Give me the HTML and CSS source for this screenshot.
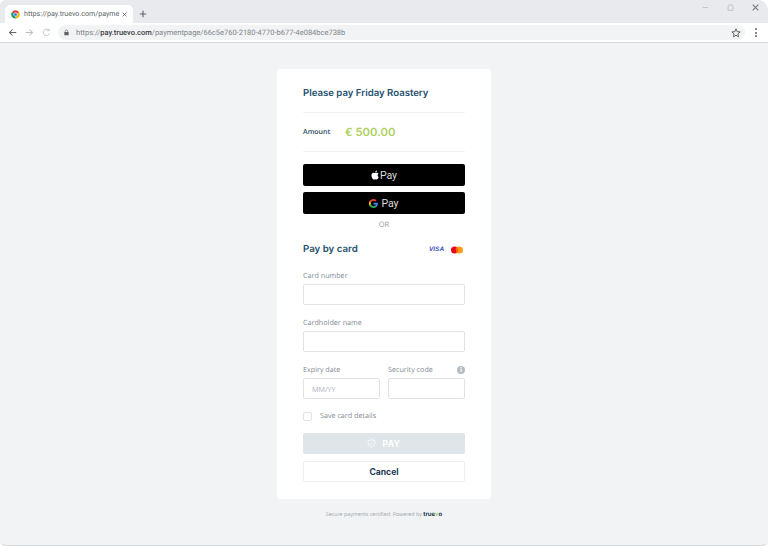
FILE: index.html

```html
<!DOCTYPE html>
<html lang="en">
<head>
    <meta charset="UTF-8">
    <meta name="viewport" content="width=device-width, initial-scale=1.0">
    <title>Truevo payment page</title>
    <link rel="stylesheet" href="styles.css">
</head>
<body>
    <div class="window">
        <div class="tabstrip">
            <div class="tab">
                <svg class="favicon" viewBox="0 0 16 16">
                    <path d="M8 8 L1.5 4.2 A7.5 7.5 0 0 1 14.5 4.2 Z" fill="#db4437"/>
                    <path d="M8 8 L14.5 4.2 A7.5 7.5 0 0 1 8 15.5 Z" fill="#f4b400"/>
                    <path d="M8 8 L8 15.5 A7.5 7.5 0 0 1 1.5 4.2 Z" fill="#0f9d58"/>
                    <circle cx="8" cy="8" r="3.7" fill="#fff"/>
                    <circle cx="8" cy="8" r="2.8" fill="#4285f4"/>
                </svg>
                <span class="tab-title">https://pay.truevo.com/payme</span>
                <svg class="tab-close" viewBox="0 0 8 8"><path d="M1 1 L7 7 M7 1 L1 7"/></svg>
            </div>
            <svg class="new-tab" viewBox="0 0 10 10"><path d="M5 1 V9 M1 5 H9"/></svg>
            <div class="window-controls">
                <svg class="win-min" viewBox="0 0 10 10"><path d="M1 5 H9"/></svg>
                <svg class="win-max" viewBox="0 0 10 10"><path d="M1.5 9 V4.5 A3.5 3.5 0 0 1 8.5 4.5 V9 Z"/></svg>
                <svg class="win-close" viewBox="0 0 10 10"><path d="M1 1 L9 9 M9 1 L1 9"/></svg>
            </div>
        </div>

        <div class="toolbar">
            <svg class="nav nav-back" viewBox="0 0 12 12"><path d="M11 6 H2 M6 2 L2 6 L6 10"/></svg>
            <svg class="nav nav-fwd" viewBox="0 0 12 12"><path d="M1 6 H10 M6 2 L10 6 L6 10"/></svg>
            <svg class="nav nav-reload" viewBox="0 0 12 12"><path d="M10 7 A4.2 4.2 0 1 1 9 3 M9.6 0.8 V3.4 H7"/></svg>
            <div class="address">
                <svg class="lock" viewBox="0 0 8 10">
                    <rect x="0.5" y="4" width="7" height="5.5" rx="0.8"/>
                    <path d="M2 4 V2.8 A2 2 0 0 1 6 2.8 V4" class="lock-loop"/>
                </svg>
                <span class="url">https://<b>pay.truevo.com</b>/paymentpage/66c5e760-2180-4770-b677-4e084bce738b</span>
                <svg class="star" viewBox="0 0 12 12"><path d="M6 1 L7.4 4.4 L11 4.7 L8.3 7 L9.1 10.6 L6 8.7 L2.9 10.6 L3.7 7 L1 4.7 L4.6 4.4 Z"/></svg>
            </div>
            <div class="menu-dots"><i></i><i></i><i></i></div>
        </div>

        <div class="page">
            <div class="card">
                <h1 class="merchant">Please pay Friday Roastery</h1>
                <div class="amount-row">
                    <span class="amount-label">Amount</span>
                    <span class="amount-value">€ 500.00</span>
                </div>

                <button class="wallet-btn">
                    <svg class="apple-logo" viewBox="0 0 14 17">
                        <path d="M11.6 9c0-2 1.6-2.9 1.7-3-1-1.400-2.400-1.600-2.900-1.600-1.200-.1-2.400.7-3 .7s-1.600-.7-2.600-.7C3.400 4.400 2.100 5.200 1.400 6.400c-1.400 2.400-.4 6 1 8 .7 1 1.500 2.100 2.500 2 1-.04 1.400-.6 2.600-.6s1.600.6 2.600.6c1.100 0 1.800-1 2.400-2 .8-1.100 1.100-2.200 1.100-2.300-.02 0-2-.8-2-3.100z"/>
                        <path d="M9.700 3.200c.5-.7.900-1.600.8-2.500-.8 0-1.700.5-2.300 1.200-.5.6-.9 1.500-.8 2.400.9.1 1.800-.4 2.300-1.100z"/>
                    </svg>
                    <span>Pay</span>
                </button>
                <button class="wallet-btn">
                    <svg class="google-logo" viewBox="0 0 16 16">
                        <path d="M15.700 8.200c0-.6-.05-1.100-.15-1.600H8v3h4.300c-.2 1-.75 1.800-1.600 2.400v2h2.600c1.500-1.400 2.400-3.400 2.400-5.800z" fill="#4285f4"/>
                        <path d="M8 16c2.200 0 4-.7 5.300-2l-2.600-2c-.7.5-1.600.8-2.700.8-2.100 0-3.900-1.400-4.500-3.300H.5v2C1.800 14.200 4.700 16 8 16z" fill="#34a853"/>
                        <path d="M3.500 9.500C3.200 8.600 3.200 7.400 3.500 6.500v-2H.5C-.2 6-.2 10 .5 11.500l3-2z" fill="#fbbc04"/>
                        <path d="M8 3.200c1.200 0 2.200.4 3 1.200l2.300-2.300C11.900.8 10.100 0 8 0 4.700 0 1.800 1.800.5 4.500l3 2C4.100 4.600 5.900 3.200 8 3.200z" fill="#ea4335"/>
                    </svg>
                    <span>Pay</span>
                </button>
                <div class="or">OR</div>

                <div class="card-head">
                    <h2>Pay by card</h2>
                    <div class="brands">
                        <span class="visa">VISA</span>
                        <svg class="mastercard" viewBox="0 0 20 12">
                            <circle cx="6" cy="6" r="6" fill="#eb001b"/>
                            <circle cx="14" cy="6" r="6" fill="#f79e1b"/>
                            <path d="M10 1.500 A6 6 0 0 1 10 10.500 A6 6 0 0 1 10 1.500 Z" fill="#ff5f00"/>
                        </svg>
                    </div>
                </div>

                <div class="field">
                    <label for="number">Card number</label>
                    <input id="number" type="text">
                </div>
                <div class="field">
                    <label for="holder">Cardholder name</label>
                    <input id="holder" type="text">
                </div>
                <div class="field-row">
                    <div class="field">
                        <label for="expiry">Expiry date</label>
                        <input id="expiry" type="text" placeholder="MM/YY">
                    </div>
                    <div class="field">
                        <div class="label-row">
                            <label for="cvv">Security code</label>
                            <span class="info">i</span>
                        </div>
                        <input id="cvv" type="text">
                    </div>
                </div>

                <label class="save-card">
                    <span class="checkbox"></span>
                    Save card details
                </label>

                <button class="pay-btn">
                    <svg class="shield" viewBox="0 0 12 12"><path d="M6 1 L10.500 2.500 V5.500 C10.500 8 8.500 10 6 11 C3.500 10 1.500 8 1.500 5.500 V2.500 Z M4 5.800 L5.500 7.300 L8 4.800"/></svg>
                    <span>PAY</span>
                </button>
                <button class="cancel-btn">Cancel</button>
            </div>
            <div class="footer">Secure payments certified. Powered by <b class="brand">true<span class="brand-v">v</span>o</b></div>
        </div>
    </div>
</body>
</html>
```

FILE: styles.css

```css
* {
    box-sizing: border-box;
}

html, body {
    margin: 0;
    height: 100%;
    overflow: hidden;
    background: #fff;
}

body {
    font-family: 'Open Sans', sans-serif;
    text-rendering: geometricPrecision;
}

svg {
    display: block;
    flex: none;
}

.window {
    height: 546px;
    display: flex;
    flex-direction: column;
    border-radius: 6px 10px 6px 6px;
    overflow: hidden;
    background: #f1f3f5;
    border-bottom: 1px solid #d5d8db;
}

/* browser chrome */
.tabstrip {
    height: 23px;
    flex: none;
    background: #e8eaed;
    display: flex;
    align-items: flex-end;
    padding-left: 5px;
}

.tab {
    width: 128px;
    height: 18px;
    background: #fff;
    border-radius: 5px 5px 0 0;
    display: flex;
    align-items: center;
    padding-left: 6px;
}

.favicon {
    width: 9px;
    height: 9px;
}

.tab-title {
    margin-left: 4px;
    font-family: 'Roboto', sans-serif;
    font-size: 7.1px;
    line-height: 12px;
    color: #5a5f64;
    white-space: nowrap;
    width: 94px;
}

.tab-close {
    width: 5px;
    height: 5px;
    margin-left: 4px;
}

.tab-close path {
    stroke: #5f6368;
    stroke-width: 1.3;
    fill: none;
}

.new-tab {
    width: 8px;
    height: 8px;
    margin: 0 0 5px 6px;
}

.new-tab path {
    stroke: #5f6368;
    stroke-width: 1.4;
    fill: none;
}

.window-controls {
    margin-left: auto;
    align-self: flex-start;
    display: flex;
    gap: 18px;
    padding: 4px 9px 0 0;
}

.window-controls svg {
    width: 7px;
    height: 7px;
    fill: none;
    stroke-width: 1;
}

.win-min, .win-max {
    stroke: #b4b7ba;
}

.window-controls .win-close {
    stroke: #75797d;
    stroke-width: 1.6;
}

.toolbar {
    height: 20px;
    flex: none;
    background: #fff;
    border-bottom: 1px solid #d4d6d9;
    display: flex;
    align-items: center;
    padding: 0 11px 0 8px;
}

.nav {
    width: 9px;
    height: 9px;
    margin-right: 8px;
    fill: none;
    stroke-width: 1.4;
}

.nav-back {
    stroke: #5f6368;
}

.nav-fwd, .nav-reload {
    stroke: #b9bcbf;
}

.nav-reload {
    margin-right: 7px;
    stroke-width: 1.1;
}

.address {
    flex: 1;
    height: 15px;
    background: #f1f3f4;
    border-radius: 8px;
    display: flex;
    align-items: center;
    padding: 0 4px 0 6px;
}

.lock {
    width: 5px;
    height: 7px;
    fill: #5f6368;
}

.lock-loop {
    fill: none;
    stroke: #5f6368;
}

.url {
    margin-left: 7px;
    font-family: 'Roboto', sans-serif;
    font-size: 7.5px;
    color: #80868b;
    white-space: nowrap;
}

.url b {
    font-weight: 500;
    color: #3c4043;
}

.star {
    width: 10px;
    height: 10px;
    margin-left: auto;
    fill: none;
    stroke: #5f6368;
    stroke-width: 1.2;
}

.menu-dots {
    display: flex;
    flex-direction: column;
    gap: 1.5px;
    margin-left: 10px;
}

.menu-dots i {
    width: 2px;
    height: 2px;
    border-radius: 50%;
    background: #5f6368;
}

/* payment page */
.page {
    flex: 1;
    display: flex;
    flex-direction: column;
    align-items: center;
    padding-top: 26px;
}

.card {
    width: 214px;
    height: 430px;
    background: #fff;
    border-radius: 3px;
    padding: 0 26px;
}

h1, h2 {
    margin: 0;
    font-family: 'Inter', sans-serif;
    font-weight: 600;
    color: #24506d;
}

.merchant {
    height: 44px;
    padding-top: 18px;
    font-size: 9.6px;
    line-height: 13px;
    border-bottom: 1px solid #f1f2f3;
}

.amount-row {
    height: 39px;
    display: flex;
    align-items: center;
    border-bottom: 1px solid #f1f2f3;
}

.amount-label {
    width: 42px;
    font-size: 7px;
    font-weight: 600;
    color: #26465c;
}

.amount-value {
    font-family: 'Inter', sans-serif;
    font-size: 11.3px;
    font-weight: 600;
    color: #aed160;
}

button {
    display: flex;
    align-items: center;
    justify-content: center;
    width: 100%;
    padding: 0;
    border-radius: 2px;
    cursor: pointer;
}

.wallet-btn {
    height: 22px;
    margin-top: 6px;
    gap: 1px;
    background: #000;
    border: none;
    color: #dcdcdc;
    font-family: 'Roboto', sans-serif;
    font-size: 10.5px;
}

.amount-row + .wallet-btn {
    margin-top: 12px;
}

.apple-logo {
    width: 8px;
    height: 10px;
    fill: #fff;
}

.google-logo {
    width: 9px;
    height: 9px;
    margin-right: 2px;
}

.or {
    margin-top: 6px;
    text-align: center;
    font-size: 7.5px;
    line-height: 11px;
    color: #8e9aa3;
}

.card-head {
    display: flex;
    align-items: center;
    justify-content: space-between;
    height: 18px;
    padding-top: 1px;
    margin-top: 9px;
}

h2 {
    font-size: 9.7px;
}

.brands {
    display: flex;
    align-items: center;
    gap: 7px;
    padding-right: 2px;
}

.visa {
    font-family: 'Liberation Sans', sans-serif;
    font-size: 6.4px;
    font-weight: 700;
    font-style: italic;
    color: #3f51c4;
}

.mastercard {
    width: 12px;
    height: 8px;
}

.field {
    display: block;
    flex: 1;
    min-width: 0;
    margin-top: 12px;
}

.field label {
    display: block;
    height: 14px;
    font-size: 7.2px;
    line-height: 13px;
    color: #7f8b94;
}

.field input {
    display: block;
    width: 100%;
    height: 21px;
    padding: 0 8px;
    margin: 0;
    background: #fff;
    border: 1px solid #dfe3e6;
    border-radius: 2px;
    font-family: 'Open Sans', sans-serif;
    font-size: 7.2px;
}

.field input::placeholder {
    color: #a9b3bb;
    opacity: 1;
}

.field-row {
    display: flex;
    gap: 8px;
    margin-top: 12px;
}

.field-row .field {
    margin-top: 0;
}

.label-row {
    display: flex;
    justify-content: space-between;
    height: 14px;
}

.info {
    width: 8px;
    height: 8px;
    border-radius: 50%;
    background: #b4bdc4;
    color: #fff;
    font-size: 6.5px;
    font-weight: 700;
    line-height: 8px;
    text-align: center;
    margin-top: 2px;
}

.save-card {
    display: flex;
    align-items: center;
    gap: 8px;
    height: 10px;
    margin-top: 12px;
    font-size: 7.2px;
    line-height: 12px;
    color: #7f8b94;
}

.checkbox {
    width: 9px;
    height: 9px;
    border: 1px solid #dfe3e6;
    border-radius: 2px;
}

.pay-btn {
    height: 21px;
    margin-top: 12px;
    gap: 6px;
    background: #dfe5e8;
    border: none;
    color: #fff;
    font-family: 'Inter', sans-serif;
    font-size: 8.5px;
    font-weight: 700;
    letter-spacing: 0.5px;
}

.shield {
    width: 9px;
    height: 9px;
    fill: none;
    stroke: #fff;
    stroke-width: 1;
}

.cancel-btn {
    height: 21px;
    margin-top: 7px;
    background: #fff;
    border: 1px solid #eceef0;
    color: #1d3b4f;
    font-family: 'Inter', sans-serif;
    font-size: 8.6px;
    font-weight: 700;
}

.footer {
    margin-top: 11px;
    font-size: 5.3px;
    line-height: 9px;
    color: #9aa3aa;
}

.brand {
    font-family: 'Inter', sans-serif;
    font-size: 6px;
    color: #1c4159;
}

.brand-v {
    color: #a9cf5a;
}
```
